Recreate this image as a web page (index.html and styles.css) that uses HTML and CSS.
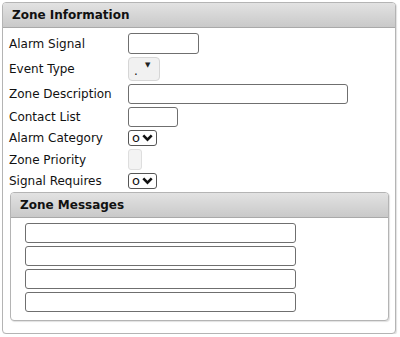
FILE: index.html
```html
<!DOCTYPE html>
<html lang="en">
  <head>
    <meta charset="UTF-8" />
    <meta name="viewport" content="width=device-width, initial-scale=1.0" />
    <title>Zone Information</title>
    <link rel="stylesheet" href="styles.css">
  </head>
  <body>
    <!-- Zone Information panel -->
    <div class="panel">
      <div class="panel-header">Zone Information</div>
      <div class="panel-body">
        <div class="field-grid">
          <label class="field-label">Alarm Signal</label>
          <div class="field"><input type="text" class="text-box box-signal" /></div>

          <label class="field-label">Event Type</label>
          <div class="field">
            <div class="soft-select">
              <span class="soft-dot">.</span>
              <span class="soft-arrow">&#9660;</span>
            </div>
          </div>

          <label class="field-label">Zone Description</label>
          <div class="field"><input type="text" class="text-box box-desc" /></div>

          <label class="field-label">Contact List</label>
          <div class="field"><input type="text" class="text-box box-contact" /></div>

          <label class="field-label">Alarm Category</label>
          <div class="field">
            <div class="mini-select">
              <span>o</span>
              <svg width="11" height="8" viewBox="0 0 11 8"><path d="M1.3 1.4 L5.5 5.6 L9.7 1.4" fill="none" stroke="#111" stroke-width="2.6" /></svg>
            </div>
          </div>

          <label class="field-label">Zone Priority</label>
          <div class="field"><div class="blank-box"></div></div>

          <label class="field-label">Signal Requires</label>
          <div class="field">
            <div class="mini-select">
              <span>o</span>
              <svg width="11" height="8" viewBox="0 0 11 8"><path d="M1.3 1.4 L5.5 5.6 L9.7 1.4" fill="none" stroke="#111" stroke-width="2.6" /></svg>
            </div>
          </div>
        </div>

        <!-- Zone Messages sub panel -->
        <div class="panel sub-panel">
          <div class="panel-header sub-header">Zone Messages</div>
          <div class="message-list">
            <input type="text" class="text-box box-message" />
            <input type="text" class="text-box box-message" />
            <input type="text" class="text-box box-message" />
            <input type="text" class="text-box box-message" />
          </div>
        </div>
      </div>
    </div>
  </body>
</html>
```

FILE: styles.css
```css
body {
  margin: 0;
  padding: 2px 4px 0 2px;
  background: #fff;
  font-family: "DejaVu Sans", Verdana, sans-serif;
  font-size: 12px;
  color: #111;
}
.panel {
  border: 1px solid #b4b4b4;
  border-radius: 4px;
  box-shadow: 1px 1px 1px rgba(0, 0, 0, 0.12);
  background: #fff;
}
.panel-header {
  height: 24px;
  line-height: 24px;
  padding-left: 9px;
  font-weight: bold;
  background: linear-gradient(to bottom, #e2e2e2, #c9c9c9);
  border-bottom: 1px solid #a9a9a9;
  border-radius: 3px 3px 0 0;
}
.panel-body {
  padding: 5px 6px 12px 6px;
}
.field-grid {
  display: grid;
  grid-template-columns: 119px 1fr;
  grid-template-rows: 21px 24px 20px 20px 16px 21px 16px;
  row-gap: 3px;
  align-items: center;
}
.field-label {
  display: block;
}
.field {
  display: flex;
  align-items: center;
}
.text-box {
  box-sizing: border-box;
  margin: 0;
  padding: 0 4px;
  border: 1px solid #6f6f6f;
  border-radius: 3px;
  background: #fff;
  font: inherit;
}
.box-signal {
  width: 71px;
  height: 21px;
}
.box-desc {
  width: 220px;
  height: 20px;
}
.box-contact {
  width: 50px;
  height: 20px;
}
.soft-select {
  position: relative;
  box-sizing: border-box;
  width: 32px;
  height: 24px;
  border: 1px solid #d6d6d6;
  border-radius: 4px;
  background: #f1f1f1;
}
.soft-dot {
  position: absolute;
  left: 5px;
  top: 6px;
  font-size: 12px;
}
.soft-arrow {
  position: absolute;
  left: 16px;
  top: 3px;
  font-size: 7px;
  color: #222;
}
.mini-select {
  box-sizing: border-box;
  display: flex;
  align-items: center;
  gap: 2px;
  width: 29px;
  height: 16px;
  padding-left: 3px;
  border: 1px solid #555;
  border-radius: 3px;
  background: #fff;
  font-size: 13px;
  line-height: 14px;
}
.blank-box {
  box-sizing: border-box;
  width: 14px;
  height: 21px;
  border: 1px solid #dedede;
  border-radius: 3px;
  background: #f3f3f3;
}
.sub-panel {
  margin: 3px 0 0 1px;
}
.sub-header {
  padding-left: 9px;
}
.message-list {
  display: flex;
  flex-direction: column;
  gap: 3px;
  padding: 5px 0 8px 14px;
}
.box-message {
  width: 271px;
  height: 20px;
}
```
